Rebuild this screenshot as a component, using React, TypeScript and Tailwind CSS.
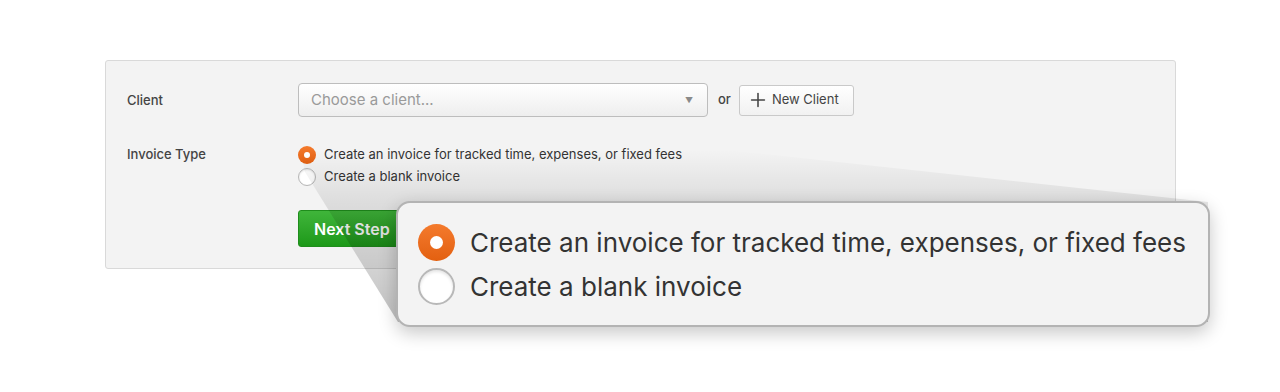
import { Plus } from "lucide-react";

function SmallRadio({ checked }: { checked?: boolean }) {
  return checked ? (
    <span className="flex h-[18px] w-[18px] items-center justify-center rounded-full bg-gradient-to-b from-[#f47a2c] to-[#e3600f]">
      <span className="h-[6px] w-[6px] rounded-full bg-white" />
    </span>
  ) : (
    <span className="h-[18px] w-[18px] rounded-full border border-[#b5b5b5] bg-white shadow-[inset_0_1px_2px_rgba(0,0,0,0.12)]" />
  );
}

function BigRadio({ checked }: { checked?: boolean }) {
  return checked ? (
    <span className="flex h-[37px] w-[37px] shrink-0 items-center justify-center rounded-full bg-gradient-to-b from-[#f47a2c] to-[#e3600f]">
      <span className="h-[13px] w-[13px] rounded-full bg-white" />
    </span>
  ) : (
    <span className="h-[37px] w-[37px] shrink-0 rounded-full border-2 border-[#b8b8b8] bg-white shadow-[inset_0_2px_3px_rgba(0,0,0,0.1)]" />
  );
}

export default function App() {
  return (
    <div className="relative h-[392px] w-[1280px] overflow-hidden bg-white font-['Inter',sans-serif] text-[#333]">
      {/* Form panel */}
      <div className="ml-[105px] mt-[60px] h-[209px] w-[1071px] rounded-[3px] border border-[#d9d9d9] bg-[#f3f3f3] pl-[21px] pt-[22px]">
        <div className="flex items-center">
          <div className="w-[171px] pt-[2px] text-[13px] font-medium text-[#444]">Client</div>
          <div className="flex h-[34px] w-[410px] items-center justify-between rounded-[4px] border border-[#bdbdbd] bg-gradient-to-b from-white to-[#eeeeee] pl-3 pr-[14px] text-[15px] text-[#9a9a9a]">
            Choose a client...
            <span className="text-[8px] text-[#8a8a8a]">▼</span>
          </div>
          <span className="ml-[10px] text-[13px] font-medium text-[#444]">or</span>
          <button className="ml-[8px] flex h-[31px] items-center gap-[3px] rounded-[3px] border border-[#c9c9c9] bg-gradient-to-b from-white to-[#f1f1f1] pl-[7px] pr-[14px] text-[13px] text-[#444]">
            <Plus size={22} strokeWidth={1.7} />
            New Client
          </button>
        </div>

        <div className="mt-[28px] flex items-start">
          <div className="w-[171px] text-[13px] leading-[19px] font-medium text-[#444]">Invoice Type</div>
          <div className="flex flex-col gap-[3px] text-[13px] leading-[19px] text-[#333]">
            <label className="flex items-center gap-[8px]">
              <SmallRadio checked />
              Create an invoice for tracked time, expenses, or fixed fees
            </label>
            <label className="flex items-center gap-[8px]">
              <SmallRadio />
              Create a blank invoice
            </label>
          </div>
        </div>

        <div className="mt-[24px] pl-[171px]">
          <button className="h-[37px] rounded-[3px] border border-[#1f8d1c] bg-gradient-to-b from-[#3fb53a] to-[#1c9918] px-[15px] text-[16px] font-semibold text-white">
            Next Step
          </button>
        </div>
      </div>

      {/* Magnifier cone */}
      <svg className="pointer-events-none absolute left-0 top-0" width="1280" height="392">
        <defs>
          <linearGradient id="cone" gradientUnits="userSpaceOnUse" x1="0" y1="150" x2="0" y2="320">
            <stop offset="0" stopColor="#000" stopOpacity="0" />
            <stop offset="0.3" stopColor="#000" stopOpacity="0.09" />
            <stop offset="1" stopColor="#000" stopOpacity="0.24" />
          </linearGradient>
        </defs>
        <polygon points="300,146 690,146 1208,202 1208,322 398,322 305,172" fill="url(#cone)" />
      </svg>

      {/* Magnifier */}
      <div className="absolute left-[396px] top-[201px] flex h-[126px] w-[814px] flex-col justify-center gap-[5px] rounded-[14px] border-2 border-[#b3b3b3] bg-[#f3f3f3] pl-[20px] text-[26px] leading-[39px] whitespace-nowrap text-[#333] shadow-[0_6px_18px_rgba(0,0,0,0.22)]">
        <div className="flex items-center gap-[15px]">
          <BigRadio checked />
          Create an invoice for tracked time, expenses, or fixed fees
        </div>
        <div className="flex items-center gap-[15px]">
          <BigRadio />
          Create a blank invoice
        </div>
      </div>
    </div>
  );
}
